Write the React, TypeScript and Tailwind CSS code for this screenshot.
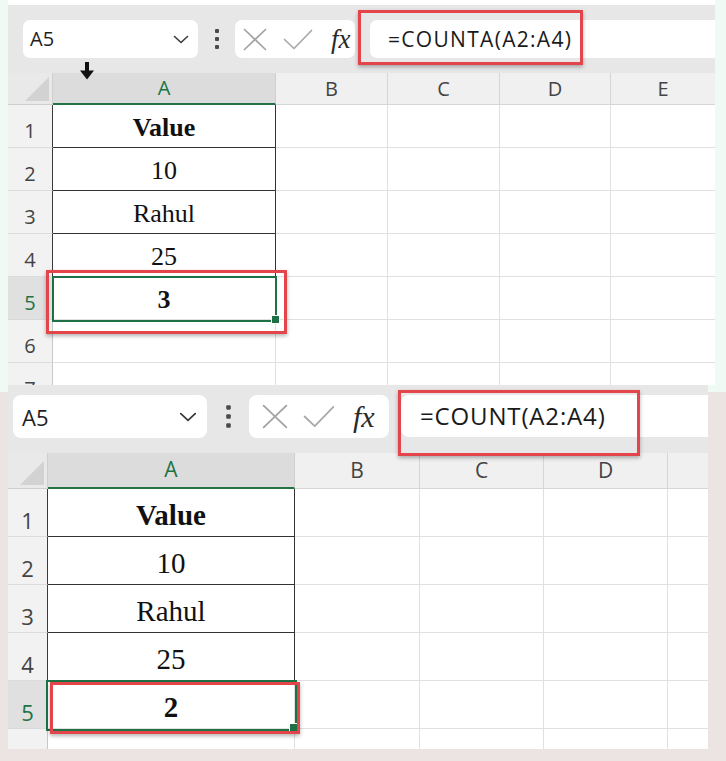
import React from "react";

const sans = "font-['Open_Sans','Noto_Sans',sans-serif]";
const serif = "font-['Liberation_Serif','Times_New_Roman',serif]";

function Chevron({ className }: { className: string }) {
  return (
    <svg className={className} viewBox="0 0 16 9" fill="none" stroke="#3a3a3a" strokeWidth="1.6" strokeLinecap="round" strokeLinejoin="round">
      <path d="M1.5 1.5 L8 7.5 L14.5 1.5" />
    </svg>
  );
}

function Dots({ className }: { className: string }) {
  return (
    <svg className={className} viewBox="0 0 6 22" fill="#4a4a4a">
      <rect x="1" y="1" width="4" height="4" rx="1" />
      <rect x="1" y="9" width="4" height="4" rx="1" />
      <rect x="1" y="17" width="4" height="4" rx="1" />
    </svg>
  );
}

function XIcon({ className }: { className: string }) {
  return (
    <svg className={className} viewBox="0 0 24 23" fill="none" stroke="#a3a3a3" strokeWidth="1.7" strokeLinecap="round">
      <path d="M1.5 1.5 L22.5 21.5 M22.5 1.5 L1.5 21.5" />
    </svg>
  );
}

function CheckIcon({ className }: { className: string }) {
  return (
    <svg className={className} viewBox="0 0 30 21" fill="none" stroke="#a9a9a9" strokeWidth="1.7" strokeLinecap="round" strokeLinejoin="round">
      <path d="M1.5 10.5 L11 19.5 L28.5 1.5" />
    </svg>
  );
}

function DownArrow() {
  return (
    <svg className="absolute left-[72px] top-[62px] w-[14px] h-[18px]" viewBox="0 0 14 18" fill="#111">
      <rect x="5" y="0" width="4" height="10" />
      <path d="M0 8.5 L14 8.5 L7 17.5 Z" />
    </svg>
  );
}

function Corner({ className }: { className: string }) {
  return (
    <div className={className}>
      <svg className="absolute right-[3px] bottom-[3px] w-[24px] h-[24px]" viewBox="0 0 24 24">
        <path d="M24 0 L24 24 L0 24 Z" fill="#d2d2d2" />
      </svg>
    </div>
  );
}

type Row = { n: string; v: string; bold?: boolean; sel?: boolean; table?: boolean };

const topRows: Row[] = [
  { n: "1", v: "Value", bold: true, table: true },
  { n: "2", v: "10", table: true },
  { n: "3", v: "Rahul", table: true },
  { n: "4", v: "25", table: true },
  { n: "5", v: "3", bold: true, sel: true },
  { n: "6", v: "" },
  { n: "7", v: "" },
];

const bottomRows: Row[] = [
  { n: "1", v: "Value", bold: true, table: true },
  { n: "2", v: "10", table: true },
  { n: "3", v: "Rahul", table: true },
  { n: "4", v: "25", table: true },
  { n: "5", v: "2", bold: true, sel: true },
  { n: "", v: "" },
];

function TopPanel() {
  return (
    <div className={`relative ml-[8px] w-[707px] h-[385px] overflow-hidden bg-white ${sans}`}>
      <div className="h-[5px] bg-white" />
      <div className="h-[68px] bg-[#e7e7e7] flex items-start pt-[15px] pl-[15px]">
        <div className="w-[175px] h-[38px] bg-white rounded-[7px] flex items-center justify-between pl-[7px] pr-[9px]">
          <span className="text-[20px] leading-none text-[#1f1f1f]">A5</span>
          <Chevron className="w-[16px] h-[9px]" />
        </div>
        <div className="w-[37px] h-[38px] flex items-center justify-center">
          <Dots className="w-[6px] h-[22px]" />
        </div>
        <div className="w-[120px] h-[38px] bg-white rounded-[7px] flex items-center pl-[8px]">
          <XIcon className="w-[24px] h-[23px]" />
          <CheckIcon className="ml-[16px] w-[30px] h-[21px]" />
          <span className={`ml-[18px] text-[27px] leading-none italic text-[#2a2a2a] ${serif}`}>fx</span>
        </div>
        <div className="ml-[15px] flex-1 h-[38px] bg-white rounded-l-[7px] flex items-center pl-[18px]">
          <span className="text-[21px] leading-none tracking-[1.3px] text-[#1a1a1a]">=COUNTA(A2:A4)</span>
        </div>
      </div>
      <div className="grid grid-cols-[45px_223px_112px_112px_111px_104px] grid-rows-[32px_repeat(7,43px)]">
        <Corner className="relative bg-[#e9e9e9] border-r border-b border-[#cfcfcf]" />
        <div className="flex items-center justify-center bg-[#dcdcdc] border-r border-r-[#cfcfcf] border-b-2 border-b-[#217346] text-[20px] text-[#217346]">A</div>
        <div className="flex items-center justify-center bg-[#f0f0f0] border-r border-b border-[#d6d6d6] text-[20px] text-[#444]">B</div>
        <div className="flex items-center justify-center bg-[#f0f0f0] border-r border-b border-[#d6d6d6] text-[20px] text-[#444]">C</div>
        <div className="flex items-center justify-center bg-[#f0f0f0] border-r border-b border-[#d6d6d6] text-[20px] text-[#444]">D</div>
        <div className="flex items-center justify-center bg-[#f0f0f0] border-b border-[#d6d6d6] text-[20px] text-[#444]">E</div>
        {topRows.map((r, i) => (
          <React.Fragment key={i}>
            <div
              className={
                r.sel
                  ? "flex items-end justify-center pb-[6px] bg-[#e0e0e0] border-b border-b-[#d8d8d8] border-r border-r-[#c8c8c8] text-[20px] leading-none text-[#217346]"
                  : r.table
                  ? "flex items-end justify-center pb-[6px] bg-[#f2f2f2] border-b border-b-[#dcdcdc] border-r border-r-[#3a3a3a] text-[20px] leading-none text-[#444]"
                  : "flex items-end justify-center pb-[6px] bg-[#f2f2f2] border-b border-b-[#dcdcdc] border-r border-r-[#c8c8c8] text-[20px] leading-none text-[#444]"
              }
            >
              {r.n}
            </div>
            <div
              className={
                r.table
                  ? `flex items-center justify-center pt-[4px] border-r border-b border-[#333] text-[26px] leading-none text-[#111] ${serif} ${r.bold ? "font-bold" : ""}`
                  : `flex items-center justify-center pt-[4px] border-r border-b border-[#e0e0e0] text-[26px] leading-none text-[#111] ${serif} ${r.bold ? "font-bold" : ""}`
              }
            >
              {r.v}
            </div>
            <div className="border-r border-b border-[#e0e0e0]" />
            <div className="border-r border-b border-[#e0e0e0]" />
            <div className="border-r border-b border-[#e0e0e0]" />
            <div className="border-b border-[#e0e0e0]" />
          </React.Fragment>
        ))}
      </div>
      <DownArrow />
      <div className="absolute left-[44px] top-[276px] w-[225px] h-[46px] border-2 border-[#1e7145]" />
      <div className="absolute left-[264px] top-[316px] w-[7px] h-[7px] bg-[#1e7145] outline outline-1 outline-white" />
      <div className="absolute left-[350px] top-[10px] w-[225px] h-[55px] border-[3px] border-[#e3454b] shadow-[0_2px_4px_rgba(0,0,0,0.3)]" />
      <div className="absolute left-[38px] top-[270px] w-[241px] h-[64px] border-[3px] border-[#e3454b] shadow-[0_2px_4px_rgba(0,0,0,0.3)]" />
    </div>
  );
}

function BottomPanel() {
  return (
    <div className={`relative ml-[8px] w-[700px] h-[364px] overflow-hidden bg-white ${sans}`}>
      <div className="h-[68px] bg-[#e7e7e7] flex items-start pt-[10px] pl-[5px]">
        <div className="w-[194px] h-[43px] bg-white rounded-[8px] flex items-center justify-between pl-[9px] pr-[10px]">
          <span className="text-[22px] leading-none text-[#1f1f1f]">A5</span>
          <Chevron className="w-[18px] h-[10px]" />
        </div>
        <div className="w-[42px] h-[43px] flex items-center justify-center">
          <Dots className="w-[7px] h-[25px]" />
        </div>
        <div className="w-[140px] h-[43px] bg-white rounded-[8px] flex items-center pl-[13px]">
          <XIcon className="w-[26px] h-[25px]" />
          <CheckIcon className="ml-[15px] w-[32px] h-[23px]" />
          <span className={`ml-[18px] text-[30px] leading-none italic text-[#2a2a2a] ${serif}`}>fx</span>
        </div>
        <div className="ml-[12px] flex-1 h-[42px] bg-white rounded-l-[8px] flex items-center pl-[19px]">
          <span className="text-[24px] leading-none tracking-[0.85px] text-[#1a1a1a]">=COUNT(A2:A4)</span>
        </div>
      </div>
      <div className="grid grid-cols-[40px_247px_125px_124px_124px_40px] grid-rows-[36px_repeat(6,48px)]">
        <Corner className="relative bg-[#e9e9e9] border-r border-b border-[#cfcfcf]" />
        <div className="flex items-center justify-center bg-[#dcdcdc] border-r border-r-[#cfcfcf] border-b-2 border-b-[#217346] text-[21px] text-[#217346]">A</div>
        <div className="flex items-center justify-center bg-[#f0f0f0] border-r border-b border-[#d6d6d6] text-[21px] text-[#444]">B</div>
        <div className="flex items-center justify-center bg-[#f0f0f0] border-r border-b border-[#d6d6d6] text-[21px] text-[#444]">C</div>
        <div className="flex items-center justify-center bg-[#f0f0f0] border-r border-b border-[#d6d6d6] text-[21px] text-[#444]">D</div>
        <div className="bg-[#f0f0f0] border-b border-[#d6d6d6]" />
        {bottomRows.map((r, i) => (
          <React.Fragment key={i}>
            <div
              className={
                r.sel
                  ? "flex items-end justify-center pb-[5px] bg-[#e0e0e0] border-b border-b-[#d8d8d8] border-r border-r-[#c8c8c8] text-[22px] leading-none text-[#217346]"
                  : r.table
                  ? "flex items-end justify-center pb-[5px] bg-[#f2f2f2] border-b border-b-[#dcdcdc] border-r border-r-[#3a3a3a] text-[22px] leading-none text-[#444]"
                  : "flex items-end justify-center pb-[5px] bg-[#f2f2f2] border-b border-b-[#dcdcdc] border-r border-r-[#c8c8c8] text-[22px] leading-none text-[#444]"
              }
            >
              {r.n}
            </div>
            <div
              className={
                r.table
                  ? `flex items-center justify-center pt-[5px] border-r border-b border-[#333] text-[29px] leading-none text-[#111] ${serif} ${r.bold ? "font-bold" : ""}`
                  : `flex items-center justify-center pt-[5px] border-r border-b border-[#e0e0e0] text-[29px] leading-none text-[#111] ${serif} ${r.bold ? "font-bold" : ""}`
              }
            >
              {r.v}
            </div>
            <div className="border-r border-b border-[#e0e0e0]" />
            <div className="border-r border-b border-[#e0e0e0]" />
            <div className="border-r border-b border-[#e0e0e0]" />
            <div className="border-b border-[#e0e0e0]" />
          </React.Fragment>
        ))}
      </div>
      <div className="absolute left-[38px] top-[295px] w-[251px] h-[51px] border-2 border-[#1e7145]" />
      <div className="absolute left-[282px] top-[339px] w-[7px] h-[7px] bg-[#1e7145] outline outline-1 outline-white" />
      <div className="absolute left-[390px] top-[5px] w-[242px] h-[66px] border-[3px] border-[#e3454b] shadow-[0_2px_4px_rgba(0,0,0,0.3)]" />
      <div className="absolute left-[42px] top-[297px] w-[250px] h-[52px] border-[3px] border-[#e3454b] shadow-[0_2px_4px_rgba(0,0,0,0.3)]" />
    </div>
  );
}

export default function App() {
  return (
    <div className="w-[726px] h-[761px] flex flex-col bg-[linear-gradient(to_bottom,#f0faf5_0px,#f0faf5_392px,#ece3e3_392px)]">
      <TopPanel />
      <BottomPanel />
    </div>
  );
}
